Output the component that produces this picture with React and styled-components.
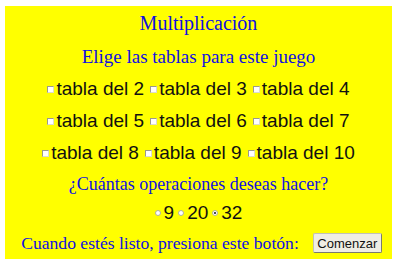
import React, { useState } from 'react';
import styled, { createGlobalStyle } from 'styled-components';

const GlobalStyle = createGlobalStyle`
  html, body {
    margin: 0;
    padding: 0;
    background: #ffffff;
  }
`;

const Page = styled.div`
  width: 400px;
  height: 264px;
  padding: 6px 8px 5px 5px;
  box-sizing: border-box;
`;

const Panel = styled.div`
  background: #ffff00;
  height: 253px;
  display: flex;
  flex-direction: column;
  align-items: center;
`;

const Heading = styled.div`
  font-family: "Liberation Serif", "Times New Roman", serif;
  color: #1010e0;
  font-size: ${p => p.size}px;
  height: ${p => p.h}px;
  line-height: ${p => p.h}px;
  white-space: nowrap;
`;

const Row = styled.div`
  display: flex;
  align-items: center;
  justify-content: center;
  gap: ${p => p.gap || 6}px;
  height: ${p => p.h}px;
  font-family: "Liberation Sans", Arial, sans-serif;
  font-size: ${p => p.size || 19}px;
  color: #111111;
  white-space: nowrap;
`;

const Option = styled.label`
  display: inline-flex;
  align-items: center;
  gap: ${p => p.gap || 2}px;
  cursor: pointer;
`;

const Box = styled.span`
  width: 5px;
  height: 5px;
  background: #ffffff;
  border: 1px solid #9a9a8c;
  border-right-color: #dcdcd0;
  border-bottom-color: #dcdcd0;
  margin-top: 1px;
`;

const Radio = styled.span`
  width: 6px;
  height: 6px;
  border-radius: 50%;
  background: #ffffff;
  border: 1px solid #b0b0a0;
  box-sizing: border-box;
  display: flex;
  align-items: center;
  justify-content: center;
  &::after {
    content: '';
    width: 2px;
    height: 2px;
    border-radius: 50%;
    background: ${p => (p.checked ? '#111111' : 'transparent')};
  }
`;

const Footer = styled.div`
  display: flex;
  align-items: center;
  gap: 14px;
  height: 32px;
  margin-left: 6px;
`;

const Button = styled.button`
  width: 69px;
  height: 20px;
  padding: 0;
  font-family: "Liberation Sans", Arial, sans-serif;
  font-size: 13px;
  color: #111111;
  background: #efede4;
  border: 1px solid #7a7a70;
  border-top-color: #c0c0b8;
  border-left-color: #c0c0b8;
  border-radius: 2px;
`;

const tablas = [[2, 3, 4], [5, 6, 7], [8, 9, 10]];
const cantidades = [9, 20, 32];

export default function App() {
  const [cantidad] = useState(32);

  return (
    <>
      <GlobalStyle />
      <Page>
        <Panel>
          <Heading size={20} h={35}>Multiplicación</Heading>
          <Heading size={19} h={32}>Elige las tablas para este juego</Heading>
          {tablas.map(fila => (
            <Row key={fila[0]} h={32}>
              {fila.map(n => (
                <Option key={n}>
                  <Box />
                  tabla del {n}
                </Option>
              ))}
            </Row>
          ))}
          <Heading size={18} h={30}>¿Cuántas operaciones deseas hacer?</Heading>
          <Row h={28} size={19} gap={4}>
            {cantidades.map(c => (
              <Option key={c} gap={3}>
                <Radio checked={c === cantidad} />
                {c}
              </Option>
            ))}
          </Row>
          <Footer>
            <Heading size={17.6} h={32}>Cuando estés listo, presiona este botón:</Heading>
            <Button>Comenzar</Button>
          </Footer>
        </Panel>
      </Page>
    </>
  );
}
